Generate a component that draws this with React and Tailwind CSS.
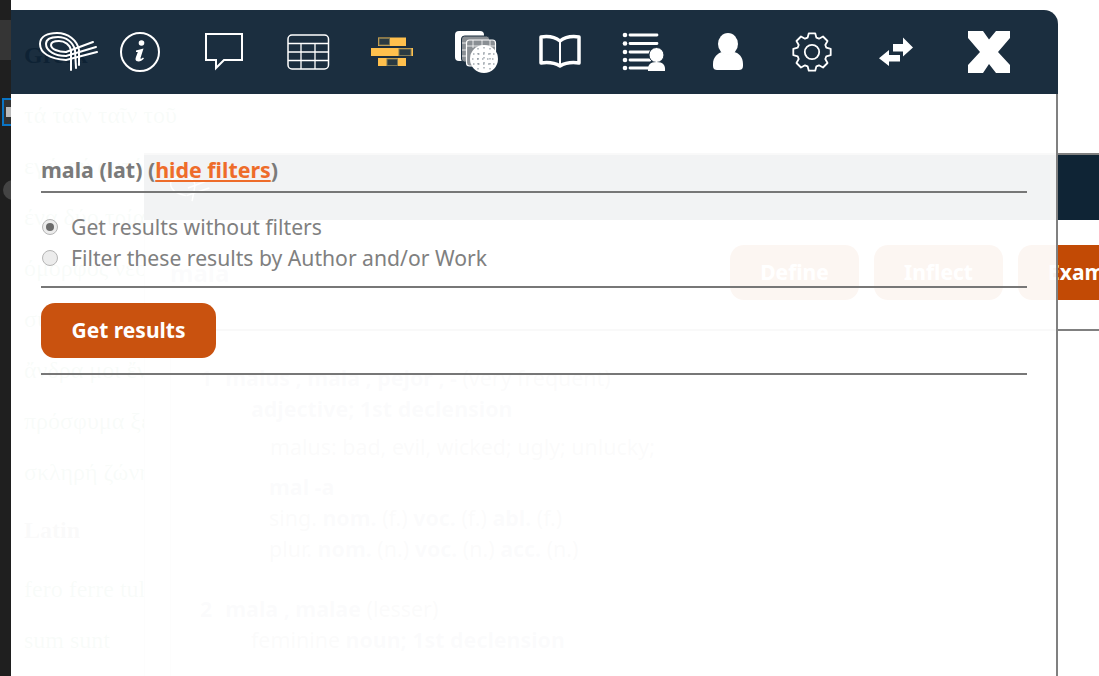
import React from "react";

const SANS = "font-['Noto_Sans',sans-serif]";

// each header icon is drawn in page coordinates, the viewBox shifts it into its cell
const Cell = ({ x, w = 84, children }) => (
  <svg width={w} height={84} viewBox={`${x} 10 ${w} 84`} className="shrink-0" fill="none">
    {children}
  </svg>
);

const Logo = () => (
  <Cell x={11} w={87}>
    <g stroke="#fff" strokeWidth="2" strokeLinecap="round" strokeLinejoin="round">
      <path d="M66 60C50 59 40 53 40 44C40 36 48 33 57 33C68 33 77 40 79 50V65" />
      <path d="M66 56C55 56 46 51 46 44C46 39 51 37 58 37C66 37 73 42 75 50L76 68" />
      <path d="M66 52C58 52 51 49 51 45C51 42 54 41 59 41C65 41 70 45 71 50V70" />
      <path d="M66 52L93 42M66 56L96 47M66 60L97 52" />
    </g>
  </Cell>
);

const InfoIcon = () => (
  <Cell x={98}>
    <circle cx="140" cy="52" r="19" stroke="#fff" strokeWidth="2" />
    <circle cx="141.500" cy="43" r="2.800" fill="#fff" />
    <path d="M136 50.500L143.500 48.500L140.500 58C140.300 59 141 59.400 143 57.500L144 58.500C141.500 61.500 138.500 62 136.500 61C135.300 60.300 135.400 59 135.800 57.600L137.800 52L136 52Z" fill="#fff" />
  </Cell>
);

const ChatIcon = () => (
  <Cell x={182}>
    <path d="M206 34H242V60H224L216 68V60H206Z" stroke="#fff" strokeWidth="2" />
  </Cell>
);

const TableIcon = () => (
  <Cell x={266}>
    <rect x="288" y="35" width="40.500" height="34" rx="4" stroke="#fff" strokeWidth="1.500" />
    <path d="M288 43.500H328M288 52H328M288 60.500H328M301 43.500V69M315 43.500V69" stroke="#fff" strokeWidth="1.300" />
  </Cell>
);

const BlocksIcon = () => (
  <Cell x={350}>
    <rect x="378" y="37.500" width="28" height="8.500" fill="#ffc04d" />
    <rect x="379" y="38.500" width="10.500" height="6.500" fill="#2a3a42" stroke="#7d7755" strokeWidth="1" />
    <rect x="371" y="48" width="42" height="8" fill="#ffc04d" />
    <rect x="399" y="49" width="12" height="6.500" fill="#2a3a42" stroke="#7d7755" strokeWidth="1" />
    <rect x="378" y="58" width="28" height="8" fill="#ffc04d" />
    <rect x="387" y="59" width="10.500" height="6.500" fill="#2a3a42" stroke="#7d7755" strokeWidth="1" />
  </Cell>
);

const CorpusIcon = () => (
  <Cell x={434}>
    <rect x="455" y="31" width="29" height="30" rx="4" fill="#fff" />
    <rect x="461.500" y="36" width="28" height="26" rx="3" fill="#8a8f94" stroke="#1b2e3f" />
    <rect x="466.500" y="40" width="29" height="26" rx="3" fill="#8a8f94" stroke="#fff" strokeWidth="1.200" />
    <path d="M462 43H467M462 50H467M462 56H467M473 40V48M482 40V48M490 40V48M467 46H495" stroke="#fff" strokeWidth="0.800" />
    <circle cx="484" cy="59" r="14" fill="#fff" />
    <path d="M484 47V71M478 48V70M490 48V70M473 54H495M472 59H496M473 64H495" stroke="#77818a" strokeWidth="1" strokeDasharray="1.500 3.500" />
  </Cell>
);

const BookIcon = () => (
  <Cell x={518}>
    <path d="M560 41C555 37 548 36 541 37V63C548 62 555 63 560 66C565 63 572 62 579 63V37C572 36 565 37 560 41Z" stroke="#fff" strokeWidth="3.500" strokeLinejoin="round" />
    <path d="M560 41V65" stroke="#fff" strokeWidth="2" />
  </Cell>
);

const ListUserIcon = () => (
  <Cell x={602}>
    {[35, 43.500, 52, 60, 68].map((y) => (
      <circle key={y} cx="625" cy={y} r="2.300" fill="#fff" />
    ))}
    <path d="M630 35H657M630 43.500H657M630 52H650M630 60H650M630 68H648" stroke="#fff" strokeWidth="2.800" strokeLinecap="round" />
    <circle cx="656.500" cy="55" r="7.500" fill="#fff" stroke="#1b2e3f" strokeWidth="1" />
    <path d="M648 71C647.500 65 650 62 656.500 62C663 62 665.500 65 665 71Z" fill="#fff" />
  </Cell>
);

const UserIcon = () => (
  <Cell x={686}>
    <ellipse cx="728" cy="44" rx="10" ry="11" fill="#fff" />
    <path d="M713 64C713 57 718 53 722 52C725 55 731 55 734 52C739 53 743 57 743 64V66C743 69 741 70 739 70H717C715 70 713 69 713 66Z" fill="#fff" />
  </Cell>
);

// eight flat teeth round the centre of the gear
const gearPath = Array.from({ length: 8 }, (_, i) => {
  const a = (i * Math.PI) / 4 - Math.PI / 2;
  const pt = (r, d) => `${(812 + r * Math.cos(a + d)).toFixed(1)} ${(52 + r * Math.sin(a + d)).toFixed(1)}`;
  return `${i ? "L" : "M"}${pt(15, -0.3)}L${pt(19, -0.17)}L${pt(19, 0.17)}L${pt(15, 0.3)}`;
}).join("") + "Z";

const GearIcon = () => (
  <Cell x={770}>
    <path d={gearPath} stroke="#fff" strokeWidth="1.800" strokeLinejoin="round" />
    <circle cx="812" cy="52" r="7.200" stroke="#fff" strokeWidth="1.800" />
  </Cell>
);

const SwapIcon = () => (
  <Cell x={854}>
    <path d="M893 44H903V37.500L913 47.500L903 56.500V51.500H893Z" fill="#fff" />
    <path d="M900 55H889V50L879 58.300L889 66V61.500H900Z" fill="#fff" />
  </Cell>
);

const CloseIcon = () => (
  <Cell x={938}>
    <path d="M968 31H983L989 39.500L996 31H1010V38L998 52L1010 65V73H996L989 64L983 73H968V65L980 52L968 38Z" fill="#fff" />
  </Cell>
);

const RadioRow = ({ checked, children }) => (
  <label className="flex h-[31px] items-center">
    <span className="ml-[1px] flex h-[16px] w-[16px] shrink-0 items-center justify-center rounded-full border border-[#b5b5b5] bg-[#ececec]">
      {checked && <span className="h-[8px] w-[8px] rounded-full bg-[#6b6b6b]" />}
    </span>
    <span className="ml-[13px] text-[21.150px] text-[#808080]">{children}</span>
  </label>
);

const GREEK = [
  "τά ταῖν ταῖν τοῦ",
  "εγώ σύ αυτός εμείς",
  "ένα δύο τρία τέσσερα",
  "όμορφος νέος καλός",
  "συνεχής πλατύς",
  "ἄνδρα μοι ἔννεπε μοῦσα",
  "πρόσφυμα ξένος",
  "σκληρή ζώνη άνδρας",
];

// dark editor strip along the left edge
const Strip = () => (
  <div className="flex w-[11px] shrink-0 flex-col overflow-hidden bg-[#1f1f1f]">
    <div className="mt-[20px] h-[40px] bg-[#353535]" />
    <div className="mt-[38px] ml-[2px] flex h-[28px] items-center border-y-2 border-l-2 border-[#0a74c4] bg-[#333] pl-[2px]">
      <span className="h-[10px] w-[5px] bg-[#bbb]" />
    </div>
    <div className="mt-[54px] ml-[3px] h-[20px] w-[20px] shrink-0 rounded-full bg-[#444]" />
  </div>
);

const Sidebar = () => (
  <aside className="w-[133px] shrink-0 pl-[13px] font-['Liberation_Serif',serif] text-[24px] whitespace-nowrap text-[#7fb58e]">
    <h2 className="mt-[40px] h-[50px] leading-[30px] font-bold text-[#0f2435]">Greek</h2>
    {GREEK.map((line) => (
      <p key={line} className="h-[51px] leading-[51px]">{line}</p>
    ))}
    <h2 className="mt-[3px] h-[63px] leading-[59px] font-bold text-[#999]">Latin</h2>
    <p className="h-[51px] leading-[51px]">fero ferre tuli latum</p>
    <p className="h-[51px] leading-[51px]">sum sunt</p>
  </aside>
);

const Results = () => (
  <main className={`min-w-0 flex-1 whitespace-nowrap ${SANS} text-[21.400px] text-[#a8a8a8]`}>
    <div className="relative mt-[153px] h-[523px] overflow-hidden border-t-2 border-[#808080] bg-white">
      <div className="flex h-[65px] items-center bg-[#0f2435] pl-[26px]">
        <svg width="40" height="30" viewBox="40 32 58 38" fill="none" stroke="#fff" strokeWidth="2">
          <path d="M63 62C50 60 40 53 41 44C42 36 52 33 61 34C71 35 77 41 76 49L72 70M66 51L93 41M64 62L97 51" />
        </svg>
      </div>
      <div className="h-[458px] border-l border-[#d8d8d8] pl-[25px]">
        <div className="flex h-[111px] items-start border-b-2 border-[#808080] pt-[25px]">
          <span className="mt-[10px] w-[560px] shrink-0 text-[24px] font-bold text-[#a9b4bd]">mala</span>
          <div className="flex shrink-0 gap-[15px] text-[21px] font-bold text-white">
            <button className="h-[55px] w-[129px] rounded-[14px] bg-[#c24a05]">Define</button>
            <button className="h-[55px] w-[129px] rounded-[14px] bg-[#c24a05]">Inflect</button>
            <button className="h-[55px] rounded-[14px] bg-[#c24a05] px-[30px]">Examples</button>
          </div>
        </div>
        <div className="h-[346px] border-l border-[#d8d8d8] pt-[31px] pl-[29px] leading-[31px]">
          <p><b className="mr-[13px] text-[#a9b4bd]">1</b><b className="text-[#a9b4bd]">malus , mala , pejor , -</b> (very frequent)</p>
          <p className="pl-[51px] font-bold text-[#a9b4bd]">adjective; 1st declension</p>
          <p className="mt-[7px] pl-[70px]">malus: bad, evil, wicked; ugly; unlucky;</p>
          <p className="mt-[9px] pl-[69px] font-bold text-[#a9b4bd]">mal -a</p>
          <p className="pl-[69px]">sing. <b className="text-[#a9b4bd]">nom.</b> (f.) <b className="text-[#a9b4bd]">voc.</b> (f.) <b className="text-[#a9b4bd]">abl.</b> (f.)</p>
          <p className="pl-[69px]">plur. <b className="text-[#a9b4bd]">nom.</b> (n.) <b className="text-[#a9b4bd]">voc.</b> (n.) <b className="text-[#a9b4bd]">acc.</b> (n.)</p>
          <p className="mt-[29px]"><b className="mr-[13px] text-[#a9b4bd]">2</b><b className="text-[#a9b4bd]">mala , malae</b> (lesser)</p>
          <p className="pl-[51px]">feminine <b className="text-[#a9b4bd]">noun; 1st declension</b></p>
        </div>
      </div>
    </div>
  </main>
);

export default function App() {
  return (
    <div className="relative flex h-[676px] w-[1099px] overflow-hidden bg-white">
      <Strip />
      <Sidebar />
      <Results />

      {/* popup lies over the page */}
      <section className={`absolute top-[10px] left-[11px] h-[666px] w-[1047px] ${SANS}`}>
        <header className="flex h-[84px] rounded-tr-[14px] bg-[#0f2335]/95">
          <Logo />
          <InfoIcon />
          <ChatIcon />
          <TableIcon />
          <BlocksIcon />
          <CorpusIcon />
          <BookIcon />
          <ListUserIcon />
          <UserIcon />
          <GearIcon />
          <SwapIcon />
          <CloseIcon />
        </header>
        <div className="h-[582px] border-r-2 border-[#808080] bg-white/95 pr-[29px] pl-[30px] text-[21.400px] text-[#7a7a7a]">
          <h1 className="flex h-[99px] items-end border-b-2 border-[#777] pb-[5px] font-bold">
            <span>mala (lat) (<a className="text-[#ee6c2a] underline underline-offset-2">hide filters</a>)</span>
          </h1>
          <div className="flex h-[95px] flex-col justify-center border-b-2 border-[#777] pt-[5px]">
            <RadioRow checked>Get results without filters</RadioRow>
            <RadioRow>Filter these results by Author and/or Work</RadioRow>
          </div>
          <div className="h-[87px] border-b-2 border-[#777] pt-[15px]">
            <button className="h-[55px] w-[175px] rounded-[14px] bg-[#c9520f] text-[21px] font-bold text-white">Get results</button>
          </div>
        </div>
      </section>
    </div>
  );
}
